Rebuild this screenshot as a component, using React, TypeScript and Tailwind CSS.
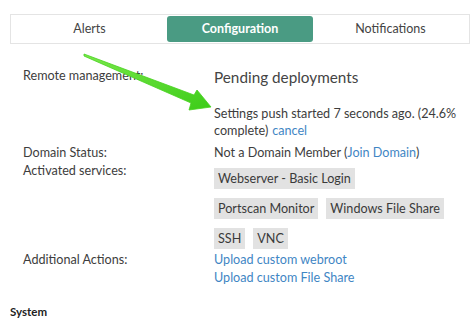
export default function App() {
  const tags = [['Webserver - Basic Login'], ['Portscan Monitor', 'Windows File Share'], ['SSH', 'VNC']];

  return (
    <div className="relative w-[474px] h-[324px] overflow-hidden bg-white font-['Lato',sans-serif] text-[12.6px] text-[#3d3d3d]">
      {/* tabs */}
      <div className="ml-[10px] w-[460px] mt-[14px] h-[30px] flex border border-[#e4e4e4] p-[1px]">
        <div className="flex-1 flex items-center justify-center text-[12.5px] text-[#444]">Alerts</div>
        <div className="w-[146px] flex items-center justify-center rounded-[3px] bg-[#4a9b83] text-[12.5px] font-bold text-white">
          Configuration
        </div>
        <div className="flex-1 flex items-center justify-center text-[12.5px] text-[#444]">Notifications</div>
      </div>

      {/* settings */}
      <div className="mt-[23px] pl-[23px] grid grid-cols-[191px_1fr] leading-[18px]">
        <div className="leading-[17px]">Remote management:</div>
        <div>
          <div className="text-[15.3px] leading-[20px] text-[#444]">Pending deployments</div>
          <div className="mt-[18px] mb-[5px] leading-[17px]">
            <div>Settings push started 7 seconds ago. (24.6%</div>
            <div className="flex gap-[4px]">
              <span>complete)</span>
              <span className="text-[#3f86c4]">cancel</span>
            </div>
          </div>
        </div>

        <div>Domain Status:</div>
        <div>
          Not a Domain Member (<span className="text-[#3f86c4]">Join Domain</span>)
        </div>

        <div>Activated services:</div>
        <div className="pt-[6px] flex flex-col gap-[9px] pb-[2px]">
          {tags.map((row, i) => (
            <div key={i} className="flex gap-[8px]">
              {row.map((t) => (
                <span key={t} className="h-[21px] px-[4px] flex items-center bg-[#e2e2e2] text-[#3a3a3a]">
                  {t}
                </span>
              ))}
            </div>
          ))}
        </div>

        <div>Additional Actions:</div>
        <div className="flex flex-col text-[#3f86c4]">
          <span>Upload custom webroot</span>
          <span>Upload custom File Share</span>
        </div>
      </div>

      <div className="mt-[16px] ml-[10px] text-[11.5px] font-bold text-[#222]">System</div>
      <div className="ml-[10px] w-[460px] mt-[4px] h-[2px] bg-[#ececec]" />

      {/* annotation arrow */}
      <svg className="absolute left-0 top-0 pointer-events-none" width="474" height="324">
        <defs>
          <linearGradient id="arrowG" x1="0" y1="0" x2="1" y2="1">
            <stop offset="0" stopColor="#7ae84a" />
            <stop offset="1" stopColor="#3ccc18" />
          </linearGradient>
        </defs>
        <polygon
          points="84,54 194,95 197,90 211,107 189,110 191,103 84,56"
          fill="url(#arrowG)"
          stroke="#46d21e"
          strokeWidth="0.8"
          strokeLinejoin="round"
        />
      </svg>
    </div>
  );
}
